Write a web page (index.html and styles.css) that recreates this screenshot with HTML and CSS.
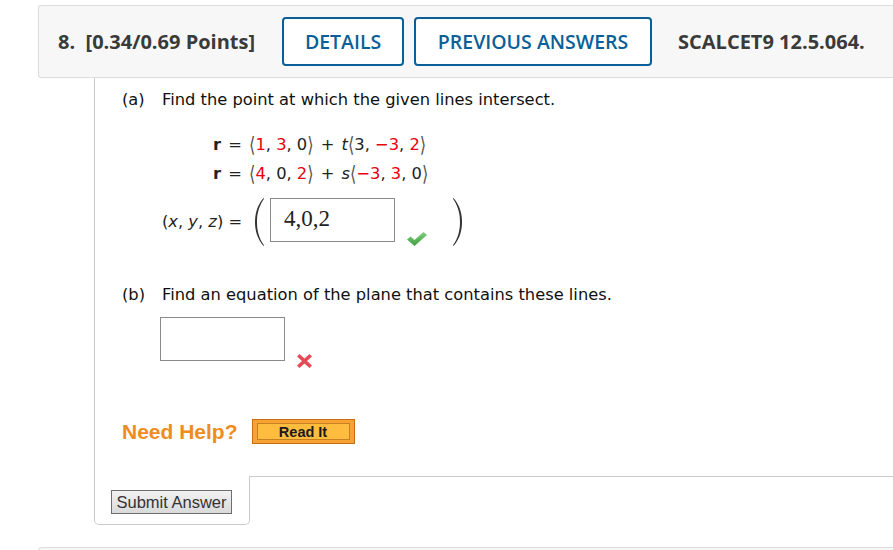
FILE: index.html
```html
<!DOCTYPE html>
<html>
<head>
<meta charset="utf-8">
<link rel="stylesheet" href="styles.css">
</head>
<body>
<div class="page">
  <div class="header">
    <span class="qnum">8.&nbsp;&nbsp;[0.34/0.69 Points]</span>
    <span class="btn btn-details">DETAILS</span>
    <span class="btn btn-prev">PREVIOUS ANSWERS</span>
    <span class="ref">SCALCET9 12.5.064.</span>
  </div>
  <div class="qbody">
    <div class="part">
      <span class="plabel">(a)</span>
      <span class="ptext">Find the point at which the given lines intersect.</span>
    </div>
    <div class="math">
      <div class="mline"><b>r</b> <span class="eq">=</span> <span class="ang">⟨</span><span class="red">1</span>, <span class="red">3</span>, 0<span class="ang">⟩</span> <span class="plus">+</span> <i>t</i><span class="ang">⟨</span>3, <span class="red">−3</span>, <span class="red">2</span><span class="ang">⟩</span></div>
      <div class="mline"><b>r</b> <span class="eq">=</span> <span class="ang">⟨</span><span class="red">4</span>, 0, <span class="red">2</span><span class="ang">⟩</span> <span class="plus">+</span> <i>s</i><span class="ang">⟨</span><span class="red">−3</span>, <span class="red">3</span>, 0<span class="ang">⟩</span></div>
    </div>
    <div class="xyz">
      <span class="xyzlabel">(<i>x</i>, <i>y</i>, <i>z</i>) =</span>
      <svg class="paren" width="12" height="50" viewBox="0 0 12 50"><path d="M10.5 1 C3.5 9 2 18 2 25 C2 32 3.5 41 10.5 49 L11 48.3 C5.2 40 4 32 4 25 C4 18 5.2 10 11 1.7 Z" fill="#333"/></svg>
      <span class="ansbox">4,0,2</span>
      <svg class="check" width="22" height="16" viewBox="0 0 22 16"><defs><linearGradient id="g" x1="0" y1="0" x2="0" y2="1"><stop offset="0" stop-color="#7fd17f"/><stop offset="1" stop-color="#3f9f3f"/></linearGradient></defs><path d="M1 8.5 L4.5 5.5 L8.5 9 L17.5 1 L21 4 L8.5 15 Z" fill="url(#g)"/></svg>
      <svg class="paren paren-r" width="12" height="50" viewBox="0 0 12 50"><path d="M1.5 1 C8.5 9 10 18 10 25 C10 32 8.5 41 1.5 49 L1 48.3 C6.8 40 8 32 8 25 C8 18 6.8 10 1 1.7 Z" fill="#333"/></svg>
    </div>
    <div class="part partb">
      <span class="plabel">(b)</span>
      <span class="ptext">Find an equation of the plane that contains these lines.</span>
    </div>
    <div class="brow">
      <span class="ansbox empty"></span>
      <svg class="cross" width="17" height="16" viewBox="0 0 17 16"><path d="M1 3.5 L3.5 1 L8.5 5.5 L13.5 1 L16 3.5 L11 8 L16 12.5 L13.5 15 L8.5 10.5 L3.5 15 L1 12.5 L6 8 Z" fill="#e84a55"/></svg>
    </div>
    <div class="help">
      <span class="needhelp">Need Help?</span>
      <span class="readit"><span class="readit-in">Read It</span></span>
    </div>
  </div>
  <div class="submitrow">
    <div class="submitcell"><span class="submit">Submit Answer</span></div>
    <div class="submitrest"></div>
  </div>
  <div class="next"></div>
</div>
</body>
</html>
```
FILE: styles.css
```css
html, body { margin: 0; padding: 0; background: #fff; }
.page { padding: 5px 0 0 38px; overflow: hidden; height: 545px; }
.header {
  height: 71px;
  border: 1px solid #dcdcdc;
  border-right: none;
  border-radius: 3px 0 0 3px;
  background: #f7f7f7;
  display: flex;
  align-items: center;
  padding-left: 19px;
  font-family: "Open Sans", sans-serif;
}
.qnum { font-weight: 700; font-size: 20px; color: #3a3a3a; margin-right: 27px; white-space: nowrap; }
.btn {
  box-sizing: border-box;
  height: 49px;
  border: 2px solid #0b5f98;
  border-radius: 4px;
  color: #0b5f98;
  font-weight: 600;
  font-size: 19.5px;
  display: flex;
  align-items: center;
  justify-content: center;
  background: #fff;
  white-space: nowrap;
}
.btn-details { width: 122px; margin-right: 10px; }
.btn-prev { width: 238px; margin-right: 26px; }
.ref { font-weight: 700; font-size: 20px; color: #3a3a3a; white-space: nowrap; }

.qbody {
  margin-left: 56px;
  border-left: 1px solid #cbcbcb;
  padding: 12px 0 32px 27px;
  font-family: "DejaVu Sans", Verdana, sans-serif;
  font-size: 16.3px;
  color: #111;
}
.part { display: flex; line-height: 20px; }
.plabel { width: 40px; }
.math { margin: 20px 0 0 91px; }
.mline { line-height: 29px; height: 29px; color: #222; }
.mline b { font-weight: 700; }
.red { color: #e8000b; }
.ang { color: #555; display: inline-block; transform: scale(1, 1.3); }
.eq, .plus { margin: 0 2px; }
.xyz { display: flex; align-items: flex-start; margin: 9px 0 0 40px; height: 50px; }
.xyzlabel { line-height: 20px; margin-top: 15px; width: 91px; color: #222; }
.paren { margin-top: 0; }
.ansbox {
  box-sizing: border-box;
  width: 125px;
  height: 44px;
  border: 1px solid #8a8a8a;
  margin: 1px 0 0 5px;
  font-family: "Liberation Serif", serif;
  font-size: 23px;
  color: #222;
  padding: 7px 0 0 13px;
  background: #fff;
}
.check { margin: 34px 0 0 11px; }
.paren-r { margin-left: 24px; }
.partb { margin-top: 38px; }
.brow { display: flex; margin: 12px 0 0 38px; align-items: flex-start; }
.ansbox.empty { margin: 0; width: 125px; height: 44px; }
.cross { margin: 36px 0 0 11px; }
.help { display: flex; align-items: center; margin-top: 50px; }
.needhelp {
  font-family: "Liberation Sans", Arial, sans-serif;
  font-weight: 700;
  font-size: 21px;
  color: #f08c1e;
  margin-right: 14px;
}
.readit {
  box-sizing: border-box;
  width: 103px;
  height: 25px;
  border: 1px solid #c86e14;
  background: #f7a235;
  padding: 3px 4px;
  display: flex;
}
.readit-in {
  flex: 1;
  border: 1px solid #c98020;
  background: #ffbd3f;
  font-family: "Liberation Sans", Arial, sans-serif;
  font-weight: 700;
  font-size: 14.5px;
  color: #1a1a1a;
  display: flex;
  align-items: center;
  justify-content: center;
}
.submitrow { display: flex; height: 49px; }
.submitcell {
  margin-left: 56px;
  width: 156px;
  border: 1px solid #cbcbcb;
  border-top: none;
  border-radius: 0 0 5px 5px;
  padding: 14px 0 0 16px;
  box-sizing: border-box;
}
.submitrest { flex: 1; border-top: 1px solid #cbcbcb; }
.submit {
  display: inline-block;
  box-sizing: border-box;
  height: 24px;
  width: 121px;
  border: 1px solid #6e6e6e;
  background: linear-gradient(#f2f2f2, #dadada);
  font-family: "Liberation Sans", Arial, sans-serif;
  font-size: 16.5px;
  color: #333;
  text-align: center;
  line-height: 22px;
}
.next {
  margin-top: 22px;
  height: 20px;
  border: 1px solid #dcdcdc;
  border-right: none;
  border-radius: 4px 0 0 0;
  background: #f7f7f7;
}
```
